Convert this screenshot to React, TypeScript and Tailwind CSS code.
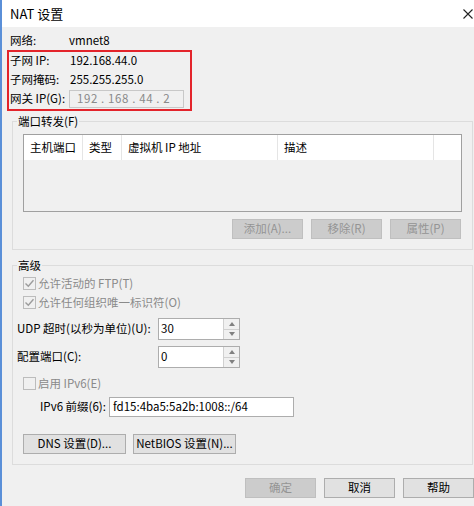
import React from "react";

function Btn({ label, disabled, className = "" }: { label: string; disabled?: boolean; className?: string }) {
  return (
    <div
      className={`h-[20px] flex items-center justify-center border ${
        disabled ? "bg-[#cccccc] border-[#bfbfbf] text-[#949494]" : "bg-[#e1e1e1] border-[#adadad] text-black"
      } ${className}`}
    >
      {label}
    </div>
  );
}

function CheckBox({ checked, label }: { checked: boolean; label: string }) {
  return (
    <div className="h-[19px] flex items-center ml-[6px] text-[#8a8a8a]">
      <div className="w-[13px] h-[13px] border border-[#bcbcbc] bg-[#f0f0f0] flex items-center justify-center">
        {checked && (
          <svg width="11" height="11" viewBox="0 0 11 11">
            <path d="M1.5 5.5 L4.3 8.3 L9.5 2.2" fill="none" stroke="#9c9c9c" strokeWidth="1.4" />
          </svg>
        )}
      </div>
      <span className="ml-[2px]">{label}</span>
    </div>
  );
}

function Spin({ value }: { value: string }) {
  return (
    <div className="w-[82px] h-[22px] border border-[#adadad] bg-white flex">
      <div className="flex-1 pl-[2px] flex items-center">{value}</div>
      <div className="w-[16px] border-l border-[#d0d0d0] bg-[#f0f0f0] flex flex-col">
        <div className="flex-1 flex items-center justify-center border-b border-[#d0d0d0]">
          <svg width="6" height="4" viewBox="0 0 6 4">
            <path d="M0 4 L3 0 L6 4 Z" fill="#808080" />
          </svg>
        </div>
        <div className="flex-1 flex items-center justify-center">
          <svg width="6" height="4" viewBox="0 0 6 4">
            <path d="M0 0 L3 4 L6 0 Z" fill="#808080" />
          </svg>
        </div>
      </div>
    </div>
  );
}

const COLUMNS = [
  { label: "主机端口", w: "w-[59px]" },
  { label: "类型", w: "w-[39px]" },
  { label: "虚拟机 IP 地址", w: "w-[156px]" },
  { label: "描述", w: "w-[156px]" },
];

export default function App() {
  return (
    <div className="w-[474px] h-[506px] overflow-hidden bg-[#f0f0f0] border-l-2 border-[#5a8fd8] flex flex-col text-[11.5px] text-black font-['Noto_Sans_CJK_SC','Noto_Sans',sans-serif]">
      <div className="h-[27px] shrink-0 bg-white flex items-center justify-between pl-[8px] pr-[1px] text-[13px]">
        <span>NAT 设置</span>
        <svg width="10" height="10" viewBox="0 0 10 10">
          <path d="M0.5 0.5 L9.5 9.5 M9.5 0.5 L0.5 9.5" stroke="#222" strokeWidth="1.1" />
        </svg>
      </div>

      <div className="flex flex-col">
        <div className="mt-[5px] h-[18px] flex items-center pl-[8px]">
          <span className="w-[59px]">网络:</span>
          <span>vmnet8</span>
        </div>

        <div className="ml-[5px] w-[185px] h-[61px] border-2 border-[#e3242b] flex flex-col pl-[1px]">
          <div className="h-[18px] flex items-center">
            <span className="w-[60px]">子网 IP:</span>
            <span>192.168.44.0</span>
          </div>
          <div className="h-[19px] flex items-center">
            <span className="w-[60px]">子网掩码:</span>
            <span>255.255.255.0</span>
          </div>
          <div className="h-[20px] flex items-center">
            <span className="w-[59px]">网关 IP(G):</span>
            <div className="w-[115px] h-[18px] border border-[#c8c8c8] bg-[#f0f0f0] flex items-center pl-[7px] text-[#8a8a8a] tracking-[0.6px]">
              192 . 168 . 44 . 2
            </div>
          </div>
        </div>

        <fieldset className="mt-[1px] ml-[10px] w-[461px] border border-[#dcdcdc]">
          <legend className="ml-[4px] px-[1px] leading-[18px]">端口转发(F)</legend>
          <div className="px-[10px] pt-[4px] pb-[10px] flex flex-col">
            <div className="w-[439px] h-[78px] border border-[#a0a0a0] bg-[#f0f0f0] flex flex-col">
              <div className="h-[25px] bg-white flex">
                {COLUMNS.map((c) => (
                  <div key={c.label} className={`${c.w} border-r border-[#e5e5e5] flex items-center pl-[6px]`}>
                    {c.label}
                  </div>
                ))}
              </div>
            </div>
            <div className="mt-[7px] flex justify-end gap-[8px] pr-[1px]">
              <Btn label="添加(A)..." disabled className="w-[71px]" />
              <Btn label="移除(R)" disabled className="w-[71px]" />
              <Btn label="属性(P)" disabled className="w-[71px]" />
            </div>
          </div>
        </fieldset>

        <fieldset className="mt-[6px] ml-[10px] w-[461px] border border-[#dcdcdc]">
          <legend className="ml-[4px] px-[1px] leading-[18px]">高级</legend>
          <div className="pl-[4px] pb-[10px] flex flex-col">
            <CheckBox checked label="允许活动的 FTP(T)" />
            <CheckBox checked label="允许任何组织唯一标识符(O)" />
            <div className="mt-[6px] flex items-center">
              <span className="w-[141px]">UDP 超时(以秒为单位)(U):</span>
              <Spin value="30" />
            </div>
            <div className="mt-[6px] flex items-center">
              <span className="w-[141px]">配置端口(C):</span>
              <Spin value="0" />
            </div>
            <div className="mt-[6px]">
              <CheckBox checked={false} label="启用 IPv6(E)" />
            </div>
            <div className="mt-[4px] flex items-center ml-[23px]">
              <span className="w-[69px]">IPv6 前缀(6):</span>
              <div className="w-[185px] h-[20px] border border-[#adadad] bg-white flex items-center pl-[3px]">
                fd15:4ba5:5a2b:1008::/64
              </div>
            </div>
            <div className="mt-[17px] ml-[6px] flex gap-[7px]">
              <Btn label="DNS 设置(D)..." className="w-[103px]" />
              <Btn label="NetBIOS 设置(N)..." className="w-[103px]" />
            </div>
          </div>
        </fieldset>

        <div className="mt-[13px] flex justify-end gap-[8px]">
          <Btn label="确定" disabled className="w-[71px]" />
          <Btn label="取消" className="w-[71px]" />
          <Btn label="帮助" className="w-[71px]" />
        </div>
      </div>
    </div>
  );
}
